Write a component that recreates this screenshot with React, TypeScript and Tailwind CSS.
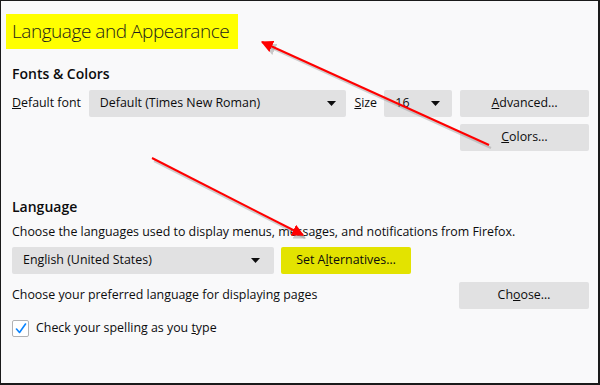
import React from 'react';

const Caret: React.FC = () => (
  <svg width="9" height="5" viewBox="0 0 9 5" className="shrink-0">
    <path d="M0 0 H9 L4.5 5 Z" fill="#0c0c0d" />
  </svg>
);

const Arrows: React.FC = () => (
  <svg className="absolute inset-0 pointer-events-none" width="600" height="385" viewBox="0 0 600 385">
    <defs>
      <marker id="head" viewBox="0 0 10 10" refX="9" refY="5" markerWidth="6" markerHeight="6" orient="auto-start-reverse">
        <path d="M0 0 L10 5 L0 10 Z" fill="#ff0000" />
      </marker>
      <marker id="headShadow" viewBox="0 0 10 10" refX="9" refY="5" markerWidth="6" markerHeight="6" orient="auto-start-reverse">
        <path d="M0 0 L10 5 L0 10 Z" fill="#9a9a9a" opacity="0.5" />
      </marker>
    </defs>
    {/* shadows */}
    <line x1="490" y1="147" x2="264" y2="44" stroke="#999" strokeOpacity="0.45" strokeWidth="2" markerEnd="url(#headShadow)" />
    <line x1="153" y1="160" x2="304" y2="237" stroke="#999" strokeOpacity="0.45" strokeWidth="2" markerEnd="url(#headShadow)" />
    {/* arrows */}
    <line x1="488" y1="144" x2="261" y2="41" stroke="#ff0000" strokeWidth="2" markerEnd="url(#head)" />
    <line x1="151" y1="157" x2="302" y2="234" stroke="#ff0000" strokeWidth="2" markerEnd="url(#head)" />
  </svg>
);

const btn = 'h-[27px] rounded-[2px] bg-[#e1e1e2] flex items-center';

export default function App() {
  return (
    <div
      className="relative w-[600px] h-[385px] overflow-hidden bg-[#f9f9fa] border-t border-l border-r-2 border-b-2 border-[#1a1a1a] text-[#0c0c0d] text-[12.4px]"
      style={{ fontFamily: '"Open Sans", "Liberation Sans", sans-serif' }}
    >
      {/* title */}
      <div className="mt-[13px] ml-[5px] w-[232px] h-[35px] bg-[#ffff00] flex items-center pl-[6px]">
        <span className="whitespace-nowrap text-[19px] font-light tracking-[-0.45px] text-[#1c1c1c]">Language and Appearance</span>
      </div>

      <div className="pl-[11px] pr-[9px]">
        {/* fonts & colors */}
        <div className="mt-[15px] text-[14px] font-semibold leading-[20px]">Fonts &amp; Colors</div>

        <div className="mt-[6px] flex items-center h-[27px]">
          <span className="w-[77px] whitespace-nowrap"><u>D</u>efault font</span>
          <div className={`${btn} w-[258px] justify-between pl-[11px] pr-[10px]`}>
            <span>Default (Times New Roman)</span>
            <Caret />
          </div>
          <span className="ml-[8px] w-[30px]"><u>S</u>ize</span>
          <div className={`${btn} w-[68px] justify-between pl-[11px] pr-[12px]`}>
            <span>16</span>
            <Caret />
          </div>
          <div className={`${btn} ml-[8px] w-[129px] justify-center`}>
            <span><u>A</u>dvanced…</span>
          </div>
        </div>

        <div className="mt-[7px] flex justify-end">
          <div className={`${btn} w-[129px] justify-center`}>
            <span><u>C</u>olors…</span>
          </div>
        </div>

        {/* language */}
        <div className="mt-[46px] text-[14px] font-semibold leading-[20px]">Language</div>
        <div className="mt-[6px] leading-[18px] whitespace-nowrap">
          Choose the languages used to display menus, messages, and notifications from Firefox.
        </div>

        <div className="mt-[6px] flex items-center">
          <div className={`${btn} w-[262px] justify-between pl-[11px] pr-[14px]`}>
            <span>English (United States)</span>
            <Caret />
          </div>
          <div className={`${btn} ml-[7px] w-[130px] justify-center bg-[#e3e300]`}>
            <span>Set A<u>l</u>ternatives…</span>
          </div>
        </div>

        <div className="mt-[8px] flex items-center justify-between">
          <span>Choose your preferred language for displaying pages</span>
          <div className={`${btn} w-[130px] justify-center`}>
            <span>Ch<u>o</u>ose…</span>
          </div>
        </div>

        <div className="mt-[10px] flex items-center gap-[7px]">
          <div className="w-[17px] h-[17px] rounded-[2px] border border-[#b1b1b3] bg-white flex items-center justify-center">
            <svg width="12" height="11" viewBox="0 0 12 11">
              <path d="M1.5 6 L4.5 9.5 L10.5 1" fill="none" stroke="#0a84ff" strokeWidth="1.6" strokeLinecap="round" strokeLinejoin="round" />
            </svg>
          </div>
          <span>Check your spelling as you <u>t</u>ype</span>
        </div>
      </div>

      <Arrows />
    </div>
  );
}
